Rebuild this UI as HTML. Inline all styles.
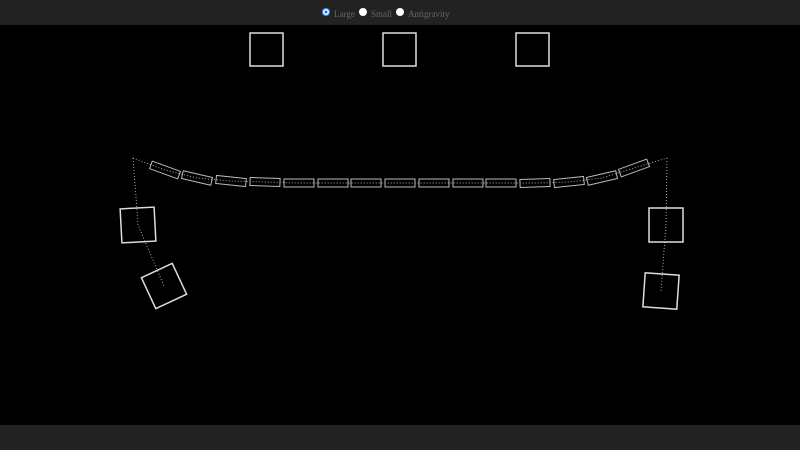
<!DOCTYPE html>
<html><head><style>
html,body{margin:0;padding:0;background:#000;width:800px;height:450px;overflow:hidden}
.top{position:absolute;left:0;top:0;width:800px;height:25px;background:#222;font-family:"Liberation Serif",serif;font-size:9px;color:#666}
.bot{position:absolute;left:0;top:425px;width:800px;height:25px;background:#222}
.r{position:absolute;top:8px;width:8px;height:8px;border-radius:50%;background:#fff}
.r.on{background:#fff;border:0;box-shadow:inset 0 0 0 1px #1a73e8,inset 0 0 0 2.5px #fff;background:#1a73e8}
.l{position:absolute;top:9px}
svg{position:absolute;left:0;top:0}
</style></head><body>
<div class="top">
<div class="r on" style="left:322px"></div><span class="l" style="left:334px">Large</span>
<div class="r" style="left:359px"></div><span class="l" style="left:371px">Small</span>
<div class="r" style="left:396px"></div><span class="l" style="left:408px">Antigravity</span>
</div>
<div class="bot"></div>
<svg width="800" height="450" fill="none" stroke="#ddd" stroke-width="1.5">
<rect x="250" y="33" width="33" height="33"/>
<rect x="383" y="33" width="33" height="33"/>
<rect x="516" y="33" width="33" height="33"/>
<g stroke="#aaa" stroke-width="1" stroke-dasharray="1,2">
<polyline points="133,158 165,170 197,178 230,181 265,182 299,183 333,183 366,183 400,183 434,183 468,183 501,183 535,183 569,182 602,178 634,168 667,158"/>
<polyline points="133,158 137,210 138,225 164,286"/>
<polyline points="667,158 666,225 661,291"/>
</g>
<g stroke="#bbb" stroke-width="1">
<rect x="-15" y="-4" width="30" height="8" transform="translate(165,170) rotate(20)"/>
<rect x="-15" y="-4" width="30" height="8" transform="translate(197,178) rotate(13)"/>
<rect x="-15" y="-4" width="30" height="8" transform="translate(231,181) rotate(6)"/>
<rect x="-15" y="-4" width="30" height="8" transform="translate(265,182) rotate(2)"/>
<rect x="-15" y="-4" width="30" height="8" transform="translate(299,183)"/>
<rect x="-15" y="-4" width="30" height="8" transform="translate(333,183)"/>
<rect x="-15" y="-4" width="30" height="8" transform="translate(366,183)"/>
<rect x="-15" y="-4" width="30" height="8" transform="translate(400,183)"/>
<rect x="-15" y="-4" width="30" height="8" transform="translate(434,183)"/>
<rect x="-15" y="-4" width="30" height="8" transform="translate(468,183)"/>
<rect x="-15" y="-4" width="30" height="8" transform="translate(501,183)"/>
<rect x="-15" y="-4" width="30" height="8" transform="translate(535,183) rotate(-2)"/>
<rect x="-15" y="-4" width="30" height="8" transform="translate(569,182) rotate(-6)"/>
<rect x="-15" y="-4" width="30" height="8" transform="translate(602,178) rotate(-13)"/>
<rect x="-15" y="-4" width="30" height="8" transform="translate(634,168) rotate(-20)"/>
</g>
<rect x="-17" y="-17" width="34" height="34" transform="translate(138,225) rotate(-3)"/>
<rect x="-17" y="-17" width="34" height="34" transform="translate(164,286) rotate(-25)"/>
<rect x="-17" y="-17" width="34" height="34" transform="translate(666,225)"/>
<rect x="-17" y="-17" width="34" height="34" transform="translate(661,291) rotate(4)"/>
</svg>
</body></html>
